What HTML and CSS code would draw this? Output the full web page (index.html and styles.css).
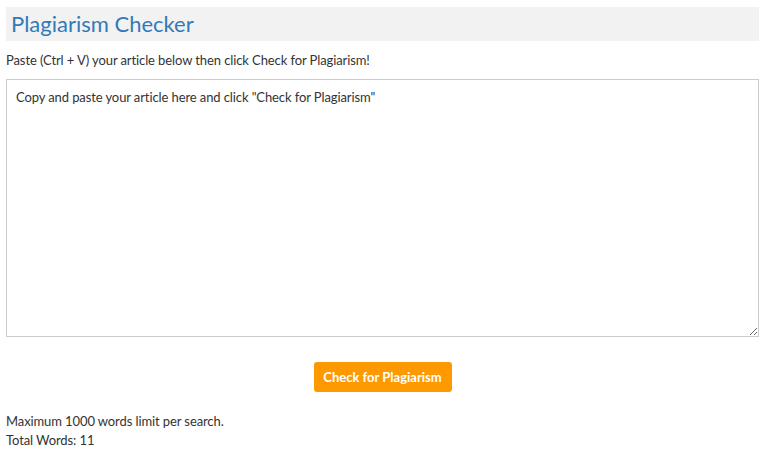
FILE: index.html
```html
<!DOCTYPE html>
<html lang="en">
<head>
    <meta charset="UTF-8">
    <title>Plagiarism Checker</title>
    <link rel="stylesheet" href="styles.css">
</head>
<body>
    <div class="checker">
        <h1 class="checker-title">Plagiarism Checker</h1>
        <p class="hint">Paste (Ctrl + V) your article below then click Check for Plagiarism!</p>
        <textarea class="article" id="article">Copy and paste your article here and click "Check for Plagiarism"</textarea>
        <div class="actions">
            <button class="check-btn" type="button">Check for Plagiarism</button>
        </div>
        <div class="info">
            <div>Maximum 1000 words limit per search.</div>
            <div>Total Words: <span id="words">11</span></div>
        </div>
    </div>
</body>
</html>
```

FILE: styles.css
```css
* {
    margin: 0;
    padding: 0;
    box-sizing: border-box;
}

body {
    font-family: 'Lato', 'Liberation Sans', sans-serif;
    font-size: 13px;
    color: #333;
    background: #fff;
    padding: 7px 9px 0 6px;
}

.checker-title {
    background: #f2f2f2;
    color: #337ab7;
    font-size: 22px;
    font-weight: normal;
    line-height: 34px;
    padding: 0 5px;
}

.hint {
    margin-top: 10px;
    line-height: 18px;
    letter-spacing: -0.1px;
}

.article {
    display: block;
    width: 100%;
    height: 258px;
    margin-top: 10px;
    padding: 8px 9px;
    border: 1px solid #ccc;
    font-family: inherit;
    font-size: 13px;
    color: #333;
    line-height: 18px;
    letter-spacing: -0.1px;
    resize: vertical;
}

.actions {
    display: flex;
    justify-content: center;
    margin-top: 25px;
}

.check-btn {
    background: #ff9900;
    color: #fff;
    border: none;
    border-radius: 3px;
    font-family: inherit;
    font-size: 13px;
    font-weight: bold;
    width: 138px;
    height: 30px;
}

.info {
    margin-top: 20px;
    line-height: 19px;
    letter-spacing: -0.1px;
}
```
